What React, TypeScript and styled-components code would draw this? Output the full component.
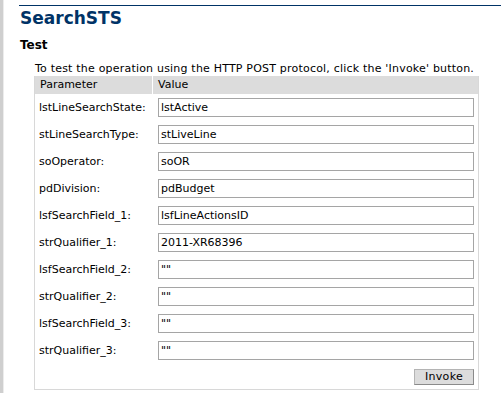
import styled, { createGlobalStyle } from "styled-components";

const GlobalStyle = createGlobalStyle`
  html, body {
    margin: 0;
    padding: 0;
    background: #ffffff;
  }
  body {
    font-family: "DejaVu Sans", Verdana, sans-serif;
    color: #000000;
  }
`;

const Page = styled.div`
  min-height: 393px;
  border-left: 3px solid #cfcfcf;
  box-shadow: inset 1px 0 0 #ececec;
  padding: 5px 0 0 16px;
  box-sizing: border-box;
`;

const Heading = styled.div`
  border-top: 1px solid #003366;
  padding: 2px 0 0 1px;
`;

const Title = styled.h1`
  margin: 0;
  font-size: 17px;
  line-height: 20px;
  font-weight: bold;
  color: #003366;
`;

const SubTitle = styled.h2`
  margin: 10px 0 0;
  font-size: 12px;
  line-height: 15px;
  font-weight: bold;
`;

const Section = styled.div`
  margin: 9px 0 0 15px;
  width: 445px;
`;

const Hint = styled.p`
  margin: 0;
  font-size: 11px;
  line-height: 14px;
  letter-spacing: 0.2px;
  padding-left: 1px;
`;

const Form = styled.div`
  border: 1px solid #d8d8d8;
  border-top: none;
  display: grid;
  grid-template-columns: 117px 1fr;
  column-gap: 1px;
  font-size: 11px;
`;

const HeadCell = styled.div`
  background: #dcdcdc;
  height: 18px;
  line-height: 18px;
  padding-left: 5px;
`;

const Label = styled.div`
  height: 27px;
  line-height: 27px;
  padding-left: 4px;
`;

const ValueCell = styled.div`
  height: 27px;
  display: flex;
  align-items: center;
  padding: 0 4px 0 5px;
`;

const Field = styled.input`
  box-sizing: border-box;
  width: 100%;
  height: 19px;
  margin: 0;
  padding: 0 2px;
  border: 1px solid #a5a5a5;
  font-family: "DejaVu Sans", Verdana, sans-serif;
  font-size: 11px;
  color: #000;
  background: #fff;
  outline: none;
`;

const Actions = styled.div`
  grid-column: 1 / span 2;
  display: flex;
  justify-content: flex-end;
  padding: 5px 4px 4px 0;
`;

const Button = styled.button`
  box-sizing: border-box;
  width: 60px;
  height: 16px;
  padding: 0;
  background: #dcdcdc;
  border: 1px solid #b4b4b4;
  border-right-color: #8a8a8a;
  border-bottom-color: #8a8a8a;
  font-family: "DejaVu Sans", Verdana, sans-serif;
  font-size: 11px;
  line-height: 14px;
  letter-spacing: 0.3px;
  color: #000;
`;

const params: [string, string][] = [
  ["lstLineSearchState:", "lstActive"],
  ["stLineSearchType:", "stLiveLine"],
  ["soOperator:", "soOR"],
  ["pdDivision:", "pdBudget"],
  ["lsfSearchField_1:", "lsfLineActionsID"],
  ["strQualifier_1:", "2011-XR68396"],
  ["lsfSearchField_2:", '""'],
  ["strQualifier_2:", '""'],
  ["lsfSearchField_3:", '""'],
  ["strQualifier_3:", '""'],
];

export default function App() {
  return (
    <>
      <GlobalStyle />
      <Page>
        <Heading>
          <Title>SearchSTS</Title>
          <SubTitle>Test</SubTitle>
        </Heading>
        <Section>
          <Hint>
            To test the operation using the HTTP POST protocol, click the 'Invoke' button.
          </Hint>
          <Form>
            <HeadCell>Parameter</HeadCell>
            <HeadCell>Value</HeadCell>
            {params.map(([name, value]) => (
              <>
                <Label key={name + "-l"}>{name}</Label>
                <ValueCell key={name + "-v"}>
                  <Field type="text" defaultValue={value} />
                </ValueCell>
              </>
            ))}
            <Actions>
              <Button type="button">Invoke</Button>
            </Actions>
          </Form>
        </Section>
      </Page>
    </>
  );
}
